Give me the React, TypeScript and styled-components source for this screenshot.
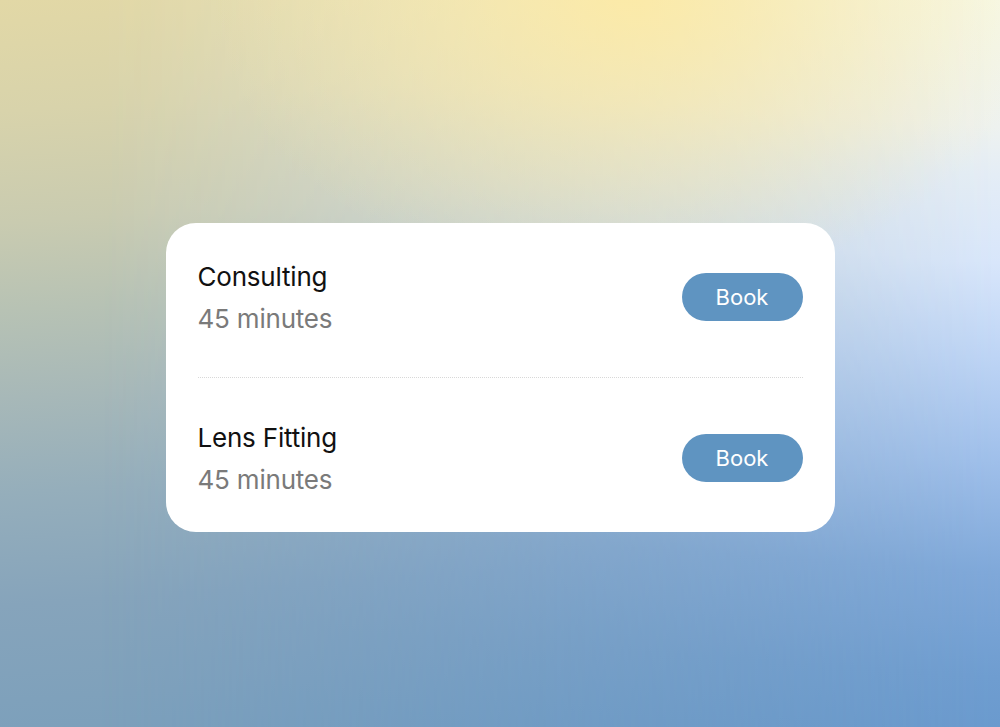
import styled, { createGlobalStyle } from "styled-components";

const GlobalStyle = createGlobalStyle`
  html, body {
    margin: 0;
    padding: 0;
  }
  body {
    font-family: Inter, "Noto Sans", sans-serif;
  }
`;

type Service = {
  name: string;
  duration: string;
};

const services: Service[] = [
  { name: "Consulting", duration: "45 minutes" },
  { name: "Lens Fitting", duration: "45 minutes" },
];

export default function App(): JSX.Element {
  return (
    <>
      <GlobalStyle />
      <Page>
        <Card>
          {services.map((s, i) => (
            <Entry key={s.name}>
              {i > 0 && <Divider />}
              <Row>
                <Info>
                  <Title>{s.name}</Title>
                  <Duration>{s.duration}</Duration>
                </Info>
                <BookButton>Book</BookButton>
              </Row>
            </Entry>
          ))}
        </Card>
      </Page>
    </>
  );
}

// left edge colours as the base, right edge colours faded in from the left,
// and a warm glow at the top
const Page = styled.div`
  position: relative;
  width: 1000px;
  height: 727px;
  display: flex;
  justify-content: center;
  align-items: flex-start;
  padding-top: 223px;
  box-sizing: border-box;
  overflow: hidden;
  background: linear-gradient(
    176deg,
    #e2d8a6 0%,
    #d8d3ab 14%,
    #c9cbb0 28%,
    #b7c2b4 39%,
    #a7b8b8 50%,
    #95aebb 62%,
    #86a4bb 76%,
    #789ebb 100%
  );

  &::before {
    content: "";
    position: absolute;
    inset: 0;
    background: linear-gradient(
      184deg,
      #f6f8e8 0%,
      #eef2f0 16%,
      #e4edf6 22%,
      #d8e6fb 33%,
      #bdd4f5 45%,
      #9fbfea 58%,
      #7fa8d9 72%,
      #6f9dd0 85%,
      #6496cb 100%
    );
    -webkit-mask-image: linear-gradient(to right, transparent 10%, black 100%);
    mask-image: linear-gradient(to right, transparent 10%, black 100%);
  }

  &::after {
    content: "";
    position: absolute;
    inset: 0;
    background: radial-gradient(
      ellipse 420px 300px at 630px -10px,
      rgba(255, 234, 160, 0.85) 0%,
      rgba(255, 234, 160, 0.45) 45%,
      rgba(255, 234, 160, 0) 100%
    );
  }
`;

const Card = styled.div`
  position: relative;
  z-index: 1;
  width: 669px;
  box-sizing: border-box;
  padding: 37px 32px 35px;
  background: #ffffff;
  border-radius: 30px;
  display: flex;
  flex-direction: column;
`;

const Entry = styled.div`
  display: flex;
  flex-direction: column;
`;

const Divider = styled.div`
  border-top: 1px dotted #d8d8d8;
  margin: 41px 0 43px;
`;

const Row = styled.div`
  display: flex;
  align-items: center;
  justify-content: space-between;
`;

const Info = styled.div`
  display: flex;
  flex-direction: column;
  gap: 8px;
`;

const Title = styled.div`
  font-size: 26px;
  line-height: 34px;
  color: #111111;
  letter-spacing: -0.2px;
`;

const Duration = styled.div`
  font-size: 26px;
  line-height: 34px;
  color: #7a7a7a;
  letter-spacing: -0.2px;
`;

const BookButton = styled.button`
  width: 121px;
  height: 48px;
  margin-top: -2px;
  border: none;
  border-radius: 24px;
  background: #5f94c1;
  color: #ffffff;
  font-family: Inter, "Noto Sans", sans-serif;
  font-size: 22px;
  padding: 0;
  cursor: pointer;
`;
